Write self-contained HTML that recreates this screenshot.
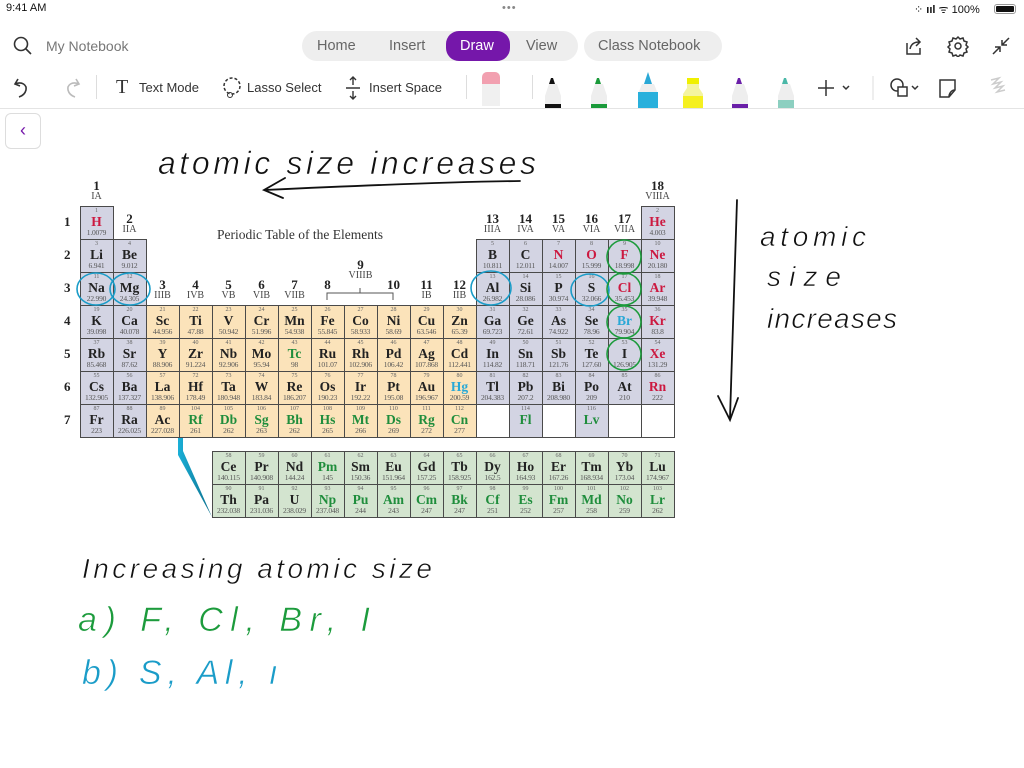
<!DOCTYPE html>
<html><head><meta charset="utf-8"><style>
*{box-sizing:border-box;margin:0;padding:0}
body{width:1024px;height:768px;background:#fff;position:relative;overflow:hidden;font-family:"Liberation Sans",sans-serif}
.abs{position:absolute}
.tb{color:#333;font-size:13px}
.grid{position:absolute;display:grid;grid-template-columns:repeat(18,33px);grid-template-rows:repeat(7,33px)}
.lg{position:absolute;left:212px;top:451px;display:grid;grid-template-columns:repeat(14,33px);grid-template-rows:repeat(2,33px)}
.c{border:1px solid #4a4a4a;margin:-0.5px;display:flex;flex-direction:column;align-items:center;font-family:"Liberation Serif",serif;color:#222;line-height:1}
.c i{font-style:normal;font-size:6px;color:#666;margin-top:1px;height:7px}
.c b{font-size:13.5px;font-weight:bold;height:13px}
.c u{text-decoration:none;font-size:7.5px;color:#555;margin-top:1px;letter-spacing:-0.2px}
.s{background:#d3d4e3}.d{background:#fbe3ba}.f{background:#d3e4cf}.e{background:#fff}
.r b{color:#cc1940}.bl b{color:#29a8d6}.g b{color:#1f8d3c}
.gh{position:absolute;font-family:"Liberation Serif",serif;text-align:center;width:33px;line-height:1;color:#222}
.gh b{display:block;font-size:13px}
.gh span{display:block;font-size:10px;color:#444}
.pl{position:absolute;left:64px;width:10px;font-family:"Liberation Serif",serif;font-weight:bold;font-size:13px;color:#222}
</style></head><body>
<!-- status bar -->
<div class="abs" style="left:6px;top:2px;font-size:11px;color:#111">9:41 AM</div>
<div class="abs" style="left:502px;top:2px;font-size:11px;color:#888;letter-spacing:1px">•••</div>
<div class="abs" style="left:914px;top:2px;font-size:11px;color:#111">⁘ <b>ııl</b> ᯤ 100%</div>
<div class="abs" style="left:994px;top:4px;width:22px;height:10px;border:1px solid #999;border-radius:3px;padding:1px"><div style="width:100%;height:100%;background:#111;border-radius:1px"></div></div>
<!-- row 2 -->
<svg class="abs" style="left:12px;top:35px" width="22" height="22"><circle cx="9" cy="9" r="6.5" fill="none" stroke="#333" stroke-width="1.6"/><line x1="14" y1="14" x2="19" y2="19" stroke="#333" stroke-width="1.6"/></svg>
<div class="abs" style="left:46px;top:38px;font-size:14px;color:#777">My Notebook</div>
<div class="abs" style="left:302px;top:31px;width:276px;height:30px;background:#eeeeee;border-radius:15px"></div>
<div class="abs" style="left:446px;top:31px;width:64px;height:30px;background:#7517aa;border-radius:13px"></div>
<div class="abs" style="left:317px;top:38px;font-size:14.5px;color:#666">Home</div>
<div class="abs" style="left:389px;top:38px;font-size:14.5px;color:#666">Insert</div>
<div class="abs" style="left:460px;top:38px;font-size:14.5px;color:#fff">Draw</div>
<div class="abs" style="left:526px;top:38px;font-size:14.5px;color:#666">View</div>
<div class="abs" style="left:584px;top:31px;width:138px;height:30px;background:#eeeeee;border-radius:15px"></div>
<div class="abs" style="left:598px;top:38px;font-size:14.5px;color:#666">Class Notebook</div>
<svg class="abs" style="left:903px;top:35px" width="110" height="22" fill="none" stroke="#333" stroke-width="1.5"><path d="M4 8v11h13v-6M7 14c1-5 4-7 9-7M13 3l4 4-4 4"/><circle cx="55" cy="11" r="3"/><path d="M55 2l2 2 3-1 1 3 3 1-1 3 2 2-2 2 1 3-3 1-1 3-3-1-2 2-2-2-3 1-1-3-3-1 1-3-2-2 2-2-1-3 3-1 1-3 3 1z"/><path d="M106 3l-7 7M99 5v5h5M90 19l7-7M97 17v-5h-5"/></svg>
<!-- row 3 -->
<svg class="abs" style="left:12px;top:75px" width="70" height="24" fill="none" stroke-width="1.6"><path d="M6 4L3 9l5 2M3 9c7-3 12 1 11 6-1 4-4 6-7 7" stroke="#333"/><path d="M64 4l3 5-5 2M67 9c-7-3-12 1-11 6 1 4 4 6 7 7" stroke="#bbb"/></svg>
<div class="abs" style="left:96px;top:75px;width:1px;height:24px;background:#ddd"></div>
<div class="abs tb" style="left:116px;top:76px;font-size:20px;font-family:'Liberation Serif'">T</div>
<div class="abs tb" style="left:139px;top:80px">Text Mode</div>
<svg class="abs" style="left:221px;top:76px" width="24" height="24"><circle cx="11" cy="10" r="8" fill="none" stroke="#333" stroke-width="1.5" stroke-dasharray="3 2"/><circle cx="9" cy="19" r="2.5" fill="none" stroke="#333"/></svg>
<div class="abs tb" style="left:247px;top:80px">Lasso Select</div>
<svg class="abs" style="left:344px;top:76px" width="18" height="24" stroke="#333" fill="none" stroke-width="1.4"><path d="M9 1v8M6 4l3-3 3 3M2 12h14M9 15v8M6 20l3 3 3-3"/></svg>
<div class="abs tb" style="left:369px;top:80px">Insert Space</div>
<div class="abs" style="left:466px;top:75px;width:1px;height:24px;background:#ddd"></div>
<div class="abs" style="left:482px;top:72px;width:18px;height:34px;background:#f0f0f0;border-radius:5px 5px 0 0"><div style="height:12px;background:#f2a0b0;border-radius:5px 5px 0 0"></div></div>
<div class="abs" style="left:532px;top:75px;width:1px;height:24px;background:#ddd"></div>
<svg class="abs" style="left:540px;top:70px" width="270" height="38">
<g><path d="M9 14l-4 12v12h16V26l-4-12z" fill="#eee"/><path d="M11 8l-2 6h6l-2-6z" fill="#111"/><rect x="5" y="34" width="16" height="4" fill="#111"/></g>
<g transform="translate(46 0)"><path d="M9 14l-4 12v12h16V26l-4-12z" fill="#eee"/><path d="M11 8l-2 6h6l-2-6z" fill="#1a9a3a"/><rect x="5" y="34" width="16" height="4" fill="#1a9a3a"/></g>
<g transform="translate(96 0)"><path d="M6 14l-4 10v14h20V24l-4-10z" fill="#eee"/><path d="M12 2l-4 12h8z" fill="#29a8d6"/><rect x="2" y="22" width="20" height="16" fill="#29b0dc"/></g>
<g transform="translate(141 0)"><path d="M6 10h12v8l4 6v14H2V24l4-6z" fill="#f4f4a0"/><rect x="6" y="8" width="12" height="6" fill="#f0f000"/><rect x="2" y="26" width="20" height="12" fill="#f5f020"/></g>
<g transform="translate(187 0)"><path d="M9 14l-4 12v12h16V26l-4-12z" fill="#eee"/><path d="M11 8l-2 6h6l-2-6z" fill="#6a1fa8"/><rect x="5" y="34" width="16" height="4" fill="#6a1fa8"/></g>
<g transform="translate(233 0)"><path d="M9 14l-4 12v12h16V26l-4-12z" fill="#eee"/><path d="M11 8l-2 6h6l-2-6z" fill="#4bb8a8"/><rect x="5" y="30" width="16" height="8" fill="#8ccfc0"/></g>
</svg>
<svg class="abs" style="left:816px;top:76px" width="210" height="24" fill="none" stroke="#333" stroke-width="1.5"><path d="M2 12h16M10 4v16M27 10l3 3 3-3"/><line x1="57" y1="0" x2="57" y2="24" stroke="#ddd" stroke-width="1"/><circle cx="81" cy="9" r="6"/><rect x="82" y="11" width="9" height="9" fill="#fff"/><path d="M96 10l3 3 3-3"/><path d="M133 21h-9V4h15v10l-6 7zM133 21c0-3 2-7 6-7"/><path d="M175 4l8-2-6 6 8-2-6 6 8-2-6 6 8-2" stroke="#ccc"/></svg>
<div class="abs" style="left:0;top:108px;width:1024px;height:1px;background:#e4e4e4"></div>
<div class="abs" style="left:5px;top:113px;width:36px;height:36px;border:1px solid #ddd;border-radius:6px;color:#7517aa;font-size:18px;text-align:center;line-height:32px">‹</div>

<!-- headers -->
<div class="abs" style="left:217px;top:227px;font-family:'Liberation Serif',serif;font-size:13.5px;color:#333">Periodic Table of the Elements</div>
<div class="gh" style="left:80px;top:179px"><b>1</b><span>IA</span></div>
<div class="gh" style="left:113px;top:212px"><b>2</b><span>IIA</span></div>
<div class="gh" style="left:146px;top:278px"><b>3</b><span>IIIB</span></div>
<div class="gh" style="left:179px;top:278px"><b>4</b><span>IVB</span></div>
<div class="gh" style="left:212px;top:278px"><b>5</b><span>VB</span></div>
<div class="gh" style="left:245px;top:278px"><b>6</b><span>VIB</span></div>
<div class="gh" style="left:278px;top:278px"><b>7</b><span>VIIB</span></div>
<div class="gh" style="left:311px;top:278px"><b>8</b></div>
<div class="gh" style="left:344px;top:258px"><b>9</b><span>VIIIB</span></div>
<div class="gh" style="left:377px;top:278px"><b>10</b></div>
<div class="gh" style="left:410px;top:278px"><b>11</b><span>IB</span></div>
<div class="gh" style="left:443px;top:278px"><b>12</b><span>IIB</span></div>
<div class="gh" style="left:476px;top:212px"><b>13</b><span>IIIA</span></div>
<div class="gh" style="left:509px;top:212px"><b>14</b><span>IVA</span></div>
<div class="gh" style="left:542px;top:212px"><b>15</b><span>VA</span></div>
<div class="gh" style="left:575px;top:212px"><b>16</b><span>VIA</span></div>
<div class="gh" style="left:608px;top:212px"><b>17</b><span>VIIA</span></div>
<div class="gh" style="left:641px;top:179px"><b>18</b><span>VIIIA</span></div>
<svg class="abs" style="left:320px;top:288px" width="80" height="14" fill="none" stroke="#555"><path d="M7 12V5h66v7M40 5V0"/></svg>
<div class="pl" style="top:214px">1</div><div class="pl" style="top:247px">2</div><div class="pl" style="top:280px">3</div><div class="pl" style="top:313px">4</div><div class="pl" style="top:346px">5</div><div class="pl" style="top:379px">6</div><div class="pl" style="top:412px">7</div>

<!-- connector -->
<svg class="abs" style="left:170px;top:405px" width="50" height="115"><defs><linearGradient id="tg" x1="0" x2="1"><stop offset="0" stop-color="#1ab0d8"/><stop offset="1" stop-color="#0d6f8c"/></linearGradient></defs><path d="M8 8h5v38l29 66H42L8 50z" fill="url(#tg)"/></svg>

<div class="grid" style="left:80px;top:206px">
<div class="c s r" style="grid-area:1/1"><i>1</i><b>H</b><u>1.0079</u></div>
<div class="c s r" style="grid-area:1/18"><i>2</i><b>He</b><u>4.003</u></div>
<div class="c s" style="grid-area:2/1"><i>3</i><b>Li</b><u>6.941</u></div>
<div class="c s" style="grid-area:2/2"><i>4</i><b>Be</b><u>9.012</u></div>
<div class="c s" style="grid-area:2/13"><i>5</i><b>B</b><u>10.811</u></div>
<div class="c s" style="grid-area:2/14"><i>6</i><b>C</b><u>12.011</u></div>
<div class="c s r" style="grid-area:2/15"><i>7</i><b>N</b><u>14.007</u></div>
<div class="c s r" style="grid-area:2/16"><i>8</i><b>O</b><u>15.999</u></div>
<div class="c s r" style="grid-area:2/17"><i>9</i><b>F</b><u>18.998</u></div>
<div class="c s r" style="grid-area:2/18"><i>10</i><b>Ne</b><u>20.180</u></div>
<div class="c s" style="grid-area:3/1"><i>11</i><b>Na</b><u>22.990</u></div>
<div class="c s" style="grid-area:3/2"><i>12</i><b>Mg</b><u>24.305</u></div>
<div class="c s" style="grid-area:3/13"><i>13</i><b>Al</b><u>26.982</u></div>
<div class="c s" style="grid-area:3/14"><i>14</i><b>Si</b><u>28.086</u></div>
<div class="c s" style="grid-area:3/15"><i>15</i><b>P</b><u>30.974</u></div>
<div class="c s" style="grid-area:3/16"><i>16</i><b>S</b><u>32.066</u></div>
<div class="c s r" style="grid-area:3/17"><i>17</i><b>Cl</b><u>35.453</u></div>
<div class="c s r" style="grid-area:3/18"><i>18</i><b>Ar</b><u>39.948</u></div>
<div class="c s" style="grid-area:4/1"><i>19</i><b>K</b><u>39.098</u></div>
<div class="c s" style="grid-area:4/2"><i>20</i><b>Ca</b><u>40.078</u></div>
<div class="c d" style="grid-area:4/3"><i>21</i><b>Sc</b><u>44.956</u></div>
<div class="c d" style="grid-area:4/4"><i>22</i><b>Ti</b><u>47.88</u></div>
<div class="c d" style="grid-area:4/5"><i>23</i><b>V</b><u>50.942</u></div>
<div class="c d" style="grid-area:4/6"><i>24</i><b>Cr</b><u>51.996</u></div>
<div class="c d" style="grid-area:4/7"><i>25</i><b>Mn</b><u>54.938</u></div>
<div class="c d" style="grid-area:4/8"><i>26</i><b>Fe</b><u>55.845</u></div>
<div class="c d" style="grid-area:4/9"><i>27</i><b>Co</b><u>58.933</u></div>
<div class="c d" style="grid-area:4/10"><i>28</i><b>Ni</b><u>58.69</u></div>
<div class="c d" style="grid-area:4/11"><i>29</i><b>Cu</b><u>63.546</u></div>
<div class="c d" style="grid-area:4/12"><i>30</i><b>Zn</b><u>65.39</u></div>
<div class="c s" style="grid-area:4/13"><i>31</i><b>Ga</b><u>69.723</u></div>
<div class="c s" style="grid-area:4/14"><i>32</i><b>Ge</b><u>72.61</u></div>
<div class="c s" style="grid-area:4/15"><i>33</i><b>As</b><u>74.922</u></div>
<div class="c s" style="grid-area:4/16"><i>34</i><b>Se</b><u>78.96</u></div>
<div class="c s bl" style="grid-area:4/17"><i>35</i><b>Br</b><u>79.904</u></div>
<div class="c s r" style="grid-area:4/18"><i>36</i><b>Kr</b><u>83.8</u></div>
<div class="c s" style="grid-area:5/1"><i>37</i><b>Rb</b><u>85.468</u></div>
<div class="c s" style="grid-area:5/2"><i>38</i><b>Sr</b><u>87.62</u></div>
<div class="c d" style="grid-area:5/3"><i>39</i><b>Y</b><u>88.906</u></div>
<div class="c d" style="grid-area:5/4"><i>40</i><b>Zr</b><u>91.224</u></div>
<div class="c d" style="grid-area:5/5"><i>41</i><b>Nb</b><u>92.906</u></div>
<div class="c d" style="grid-area:5/6"><i>42</i><b>Mo</b><u>95.94</u></div>
<div class="c d g" style="grid-area:5/7"><i>43</i><b>Tc</b><u>98</u></div>
<div class="c d" style="grid-area:5/8"><i>44</i><b>Ru</b><u>101.07</u></div>
<div class="c d" style="grid-area:5/9"><i>45</i><b>Rh</b><u>102.906</u></div>
<div class="c d" style="grid-area:5/10"><i>46</i><b>Pd</b><u>106.42</u></div>
<div class="c d" style="grid-area:5/11"><i>47</i><b>Ag</b><u>107.868</u></div>
<div class="c d" style="grid-area:5/12"><i>48</i><b>Cd</b><u>112.441</u></div>
<div class="c s" style="grid-area:5/13"><i>49</i><b>In</b><u>114.82</u></div>
<div class="c s" style="grid-area:5/14"><i>50</i><b>Sn</b><u>118.71</u></div>
<div class="c s" style="grid-area:5/15"><i>51</i><b>Sb</b><u>121.76</u></div>
<div class="c s" style="grid-area:5/16"><i>52</i><b>Te</b><u>127.60</u></div>
<div class="c s" style="grid-area:5/17"><i>53</i><b>I</b><u>126.905</u></div>
<div class="c s r" style="grid-area:5/18"><i>54</i><b>Xe</b><u>131.29</u></div>
<div class="c s" style="grid-area:6/1"><i>55</i><b>Cs</b><u>132.905</u></div>
<div class="c s" style="grid-area:6/2"><i>56</i><b>Ba</b><u>137.327</u></div>
<div class="c d" style="grid-area:6/3"><i>57</i><b>La</b><u>138.906</u></div>
<div class="c d" style="grid-area:6/4"><i>72</i><b>Hf</b><u>178.49</u></div>
<div class="c d" style="grid-area:6/5"><i>73</i><b>Ta</b><u>180.948</u></div>
<div class="c d" style="grid-area:6/6"><i>74</i><b>W</b><u>183.84</u></div>
<div class="c d" style="grid-area:6/7"><i>75</i><b>Re</b><u>186.207</u></div>
<div class="c d" style="grid-area:6/8"><i>76</i><b>Os</b><u>190.23</u></div>
<div class="c d" style="grid-area:6/9"><i>77</i><b>Ir</b><u>192.22</u></div>
<div class="c d" style="grid-area:6/10"><i>78</i><b>Pt</b><u>195.08</u></div>
<div class="c d" style="grid-area:6/11"><i>79</i><b>Au</b><u>196.967</u></div>
<div class="c d bl" style="grid-area:6/12"><i>80</i><b>Hg</b><u>200.59</u></div>
<div class="c s" style="grid-area:6/13"><i>81</i><b>Tl</b><u>204.383</u></div>
<div class="c s" style="grid-area:6/14"><i>82</i><b>Pb</b><u>207.2</u></div>
<div class="c s" style="grid-area:6/15"><i>83</i><b>Bi</b><u>208.980</u></div>
<div class="c s" style="grid-area:6/16"><i>84</i><b>Po</b><u>209</u></div>
<div class="c s" style="grid-area:6/17"><i>85</i><b>At</b><u>210</u></div>
<div class="c s r" style="grid-area:6/18"><i>86</i><b>Rn</b><u>222</u></div>
<div class="c s" style="grid-area:7/1"><i>87</i><b>Fr</b><u>223</u></div>
<div class="c s" style="grid-area:7/2"><i>88</i><b>Ra</b><u>226.025</u></div>
<div class="c d" style="grid-area:7/3"><i>89</i><b>Ac</b><u>227.028</u></div>
<div class="c d g" style="grid-area:7/4"><i>104</i><b>Rf</b><u>261</u></div>
<div class="c d g" style="grid-area:7/5"><i>105</i><b>Db</b><u>262</u></div>
<div class="c d g" style="grid-area:7/6"><i>106</i><b>Sg</b><u>263</u></div>
<div class="c d g" style="grid-area:7/7"><i>107</i><b>Bh</b><u>262</u></div>
<div class="c d g" style="grid-area:7/8"><i>108</i><b>Hs</b><u>265</u></div>
<div class="c d g" style="grid-area:7/9"><i>109</i><b>Mt</b><u>266</u></div>
<div class="c d g" style="grid-area:7/10"><i>110</i><b>Ds</b><u>269</u></div>
<div class="c d g" style="grid-area:7/11"><i>111</i><b>Rg</b><u>272</u></div>
<div class="c d g" style="grid-area:7/12"><i>112</i><b>Cn</b><u>277</u></div>
<div class="c e" style="grid-area:7/13"></div>
<div class="c s g" style="grid-area:7/14"><i>114</i><b>Fl</b></div>
<div class="c e" style="grid-area:7/15"></div>
<div class="c s g" style="grid-area:7/16"><i>116</i><b>Lv</b></div>
<div class="c e" style="grid-area:7/17"></div>
<div class="c e" style="grid-area:7/18"></div>
</div>

<div class="lg">
<div class="c f"><i>58</i><b>Ce</b><u>140.115</u></div>
<div class="c f"><i>59</i><b>Pr</b><u>140.908</u></div>
<div class="c f"><i>60</i><b>Nd</b><u>144.24</u></div>
<div class="c f g"><i>61</i><b>Pm</b><u>145</u></div>
<div class="c f"><i>62</i><b>Sm</b><u>150.36</u></div>
<div class="c f"><i>63</i><b>Eu</b><u>151.964</u></div>
<div class="c f"><i>64</i><b>Gd</b><u>157.25</u></div>
<div class="c f"><i>65</i><b>Tb</b><u>158.925</u></div>
<div class="c f"><i>66</i><b>Dy</b><u>162.5</u></div>
<div class="c f"><i>67</i><b>Ho</b><u>164.93</u></div>
<div class="c f"><i>68</i><b>Er</b><u>167.26</u></div>
<div class="c f"><i>69</i><b>Tm</b><u>168.934</u></div>
<div class="c f"><i>70</i><b>Yb</b><u>173.04</u></div>
<div class="c f"><i>71</i><b>Lu</b><u>174.967</u></div>
<div class="c f"><i>90</i><b>Th</b><u>232.038</u></div>
<div class="c f"><i>91</i><b>Pa</b><u>231.036</u></div>
<div class="c f"><i>92</i><b>U</b><u>238.029</u></div>
<div class="c f g"><i>93</i><b>Np</b><u>237.048</u></div>
<div class="c f g"><i>94</i><b>Pu</b><u>244</u></div>
<div class="c f g"><i>95</i><b>Am</b><u>243</u></div>
<div class="c f g"><i>96</i><b>Cm</b><u>247</u></div>
<div class="c f g"><i>97</i><b>Bk</b><u>247</u></div>
<div class="c f g"><i>98</i><b>Cf</b><u>251</u></div>
<div class="c f g"><i>99</i><b>Es</b><u>252</u></div>
<div class="c f g"><i>100</i><b>Fm</b><u>257</u></div>
<div class="c f g"><i>101</i><b>Md</b><u>258</u></div>
<div class="c f g"><i>102</i><b>No</b><u>259</u></div>
<div class="c f g"><i>103</i><b>Lr</b><u>262</u></div>
</div>

<!-- ink -->
<svg class="abs" style="left:0;top:0" width="1024" height="768" fill="none" stroke-linecap="round">
<g stroke="#1a9cc8" stroke-width="1.6"><ellipse cx="96" cy="289" rx="19" ry="16"/><ellipse cx="130" cy="289" rx="20" ry="16"/><ellipse cx="491" cy="288" rx="20" ry="17"/><ellipse cx="590" cy="290" rx="19" ry="16"/></g>
<g stroke="#1c9b3c" stroke-width="1.6"><ellipse cx="624" cy="257" rx="17" ry="17"/><ellipse cx="624" cy="289" rx="17" ry="16"/><ellipse cx="624" cy="322" rx="17" ry="16"/><ellipse cx="624" cy="354" rx="17" ry="16"/></g>
<g stroke="#111" stroke-width="1.8"><path d="M264 190C350 186 440 182 520 181M285 178L264 190L283 198"/><path d="M737 200C735 270 733 340 730 418M718 396L730 420L738 398"/></g>
<g font-family="Liberation Sans,sans-serif" font-style="italic" fill="#111" stroke="#fff" stroke-width="0.6">
<text x="158" y="174" font-size="32" textLength="378" lengthAdjust="spacing">atomic  size  increases</text>
<text x="760" y="246" font-size="28" textLength="106" lengthAdjust="spacing">atomic</text>
<text x="767" y="286" font-size="28" textLength="74" lengthAdjust="spacing">size</text>
<text x="767" y="328" font-size="28" textLength="130" lengthAdjust="spacing">increases</text>
<text x="82" y="578" font-size="28" textLength="350" lengthAdjust="spacing">Increasing   atomic   size</text>
<text x="78" y="631" font-size="34" fill="#1c9b3c" textLength="292" lengthAdjust="spacing">a)  F,  Cl,  Br,  I</text>
<text x="82" y="684" font-size="34" fill="#1a9cc8" textLength="196" lengthAdjust="spacing">b)  S,  Al,  ı</text>
</g>
</svg>
</body></html>
